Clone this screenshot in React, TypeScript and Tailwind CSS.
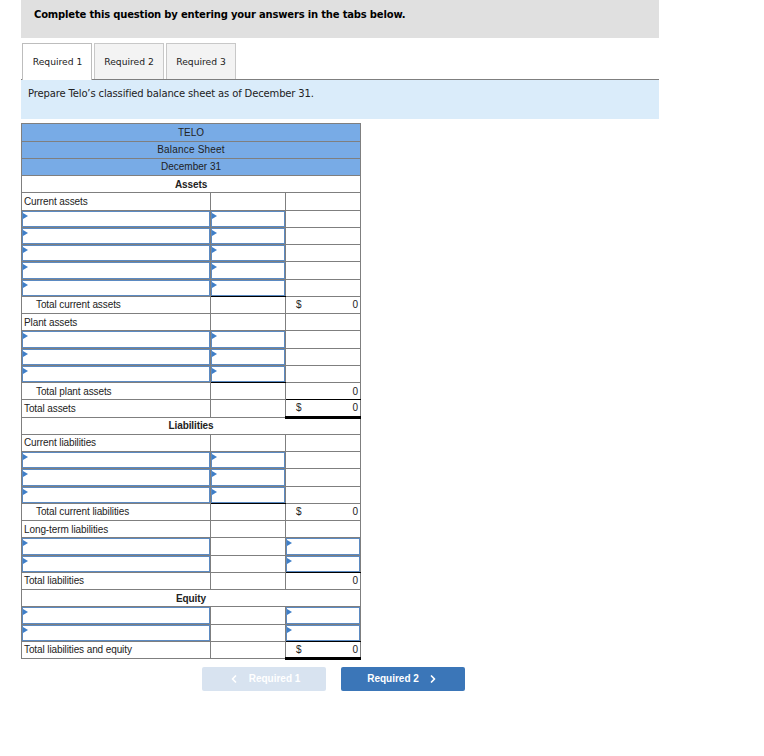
import { ChevronLeft, ChevronRight } from 'lucide-react';

type Cell = 'input' | 'dollar' | 'zero' | 'dollarZero' | '';
type Line = '' | 'black' | 'thick';

interface Row {
  label?: string;
  heading?: boolean;
  indent?: boolean;
  first?: 'input';
  second?: 'input';
  secondLine?: Line;
  third?: Cell;
  thirdLine?: Line;
  tall?: boolean;
  // the source table's text sits a pixel off centre in some rows
  nudge?: 'pt-[2px]' | 'pb-[2px]';
}

const rows: Row[] = [
  { label: 'Current assets', tall: true },
  { first: 'input', second: 'input' },
  { first: 'input', second: 'input' },
  { first: 'input', second: 'input' },
  { first: 'input', second: 'input', tall: true },
  { first: 'input', second: 'input', secondLine: 'black' },
  { label: 'Total current assets', indent: true, third: 'dollarZero' },
  { label: 'Plant assets', nudge: 'pt-[2px]' },
  { first: 'input', second: 'input', tall: true },
  { first: 'input', second: 'input' },
  { first: 'input', second: 'input', secondLine: 'black' },
  { label: 'Total plant assets', indent: true, third: 'zero', thirdLine: 'black', nudge: 'pt-[2px]' },
  { label: 'Total assets', third: 'dollarZero', thirdLine: 'thick', tall: true },
  { label: 'Liabilities', heading: true, nudge: 'pb-[2px]' },
  { label: 'Current liabilities' },
  { first: 'input', second: 'input' },
  { first: 'input', second: 'input', tall: true },
  { first: 'input', second: 'input', secondLine: 'black' },
  { label: 'Total current liabilities', indent: true, third: 'dollarZero' },
  { label: 'Long-term liabilities', nudge: 'pt-[2px]' },
  { first: 'input', third: 'input', tall: true },
  { first: 'input', third: 'input', thirdLine: 'black' },
  { label: 'Total liabilities', third: 'zero' },
  { label: 'Equity', heading: true, nudge: 'pt-[2px]' },
  { first: 'input', third: 'input', tall: true },
  { first: 'input', third: 'input', thirdLine: 'black' },
  { label: 'Total liabilities and equity', third: 'dollarZero', thirdLine: 'thick' },
];

const cellBase = 'border border-[#7f7f7f] p-0 align-middle';

function lineClass(line?: Line) {
  if (line === 'black') return 'border-b-black';
  if (line === 'thick') return 'border-b-[3px] border-b-black';
  return '';
}

function EntryBox({ tall }: { tall?: boolean }) {
  return (
    <div className={`relative ${tall ? 'h-[17px]' : 'h-[16px]'}`}>
      <input
        type="text"
        aria-label="answer"
        className="block h-full w-full border border-[#5b8ac2] bg-white outline-none"
      />
      <span className="absolute left-[1px] top-[2px] h-0 w-0 border-y-[3px] border-l-[5px] border-y-transparent border-l-[#3f7fc8]" />
    </div>
  );
}

function Amount({ kind }: { kind?: Cell }) {
  if (kind === 'input' || !kind) return null;
  return (
    <div className="flex justify-between pl-[10px] pr-[2px]">
      <span>{kind === 'dollar' || kind === 'dollarZero' ? '$' : ''}</span>
      <span>{kind === 'zero' || kind === 'dollarZero' ? '0' : ''}</span>
    </div>
  );
}

function BalanceRow({ row }: { row: Row }) {
  const height = row.tall ? 'h-[18px]' : 'h-[17px]';
  const nudge = row.nudge ?? '';

  if (row.heading) {
    return (
      <tr className={height}>
        <td colSpan={3} className={`${cellBase} ${nudge} text-center font-bold`}>
          {row.label}
        </td>
      </tr>
    );
  }

  return (
    <tr className={height}>
      <td className={`${cellBase} ${nudge}`}>
        {row.first === 'input' ? (
          <EntryBox tall={row.tall} />
        ) : (
          <div className={row.indent ? 'pl-[14px]' : 'pl-[2px]'}>{row.label}</div>
        )}
      </td>
      <td className={`${cellBase} ${lineClass(row.secondLine)}`}>
        {row.second === 'input' && <EntryBox tall={row.tall} />}
      </td>
      <td className={`${cellBase} ${nudge} ${lineClass(row.thirdLine)}`}>
        {row.third === 'input' ? <EntryBox tall={row.tall} /> : <Amount kind={row.third} />}
      </td>
    </tr>
  );
}

export default function App() {
  return (
    <div className="min-h-[756px] w-[764px] bg-white pl-[21px] font-['Liberation_Sans',Arial,sans-serif] text-[10px] leading-[12px] tracking-[-0.1px] text-[#222]">
      <div className="w-[638px] tracking-normal">
        <div className="h-[38px] bg-[#e0e0e0] pl-[13px] pt-[8px] font-['DejaVu_Sans',Verdana,sans-serif] text-[10px] font-bold leading-[14px] tracking-[-0.18px] text-black">
          Complete this question by entering your answers in the tabs below.
        </div>

        {/* Tabs */}
        <div className="mt-[5px] flex h-[37px] gap-[2px] border-b border-[#7f7f7f] pl-px font-['DejaVu_Sans',Verdana,sans-serif] text-[9.2px] text-[#222]">
          <div className="flex h-[37px] w-[70px] items-center justify-center border border-b-0 border-[#bdbdbd] bg-white pb-[1px] pl-[1px]">
            Required 1
          </div>
          <div className="flex h-[36px] w-[70px] items-center justify-center border border-b-0 border-[#c8c8c8] bg-[#f3f3f3]">
            Required 2
          </div>
          <div className="flex h-[36px] w-[70px] items-center justify-center border border-b-0 border-[#c8c8c8] bg-[#f3f3f3]">
            Required 3
          </div>
        </div>

        <div className="h-[39px] bg-[#daecfa] pl-[7px] pt-[7px] font-['DejaVu_Sans',Verdana,sans-serif] text-[10px] leading-[14px] tracking-[-0.14px] text-[#222]">
          Prepare Telo’s classified balance sheet as of December 31.
        </div>
      </div>

      <table className="mt-[4px] w-[339px] table-fixed border-collapse">
        <colgroup>
          <col className="w-[189px]" />
          <col className="w-[75px]" />
          <col className="w-[75px]" />
        </colgroup>
        <tbody>
          <tr className="h-[18px] bg-[#78abe6]">
            <td colSpan={3} className={`${cellBase} text-center tracking-normal`}>TELO</td>
          </tr>
          <tr className="h-[17px] bg-[#78abe6]">
            <td colSpan={3} className={`${cellBase} text-center tracking-[0.2px]`}>Balance Sheet</td>
          </tr>
          <tr className="h-[17px] bg-[#78abe6]">
            <td colSpan={3} className={`${cellBase} text-center tracking-normal`}>December 31</td>
          </tr>
          <tr className="h-[17px]">
            <td colSpan={3} className={`${cellBase} pt-[2px] text-center font-bold`}>Assets</td>
          </tr>
          {rows.map((row, i) => (
            <BalanceRow key={i} row={row} />
          ))}
        </tbody>
      </table>

      {/* Prev / next */}
      <div className="ml-[181px] mt-[7px] flex gap-[15px] font-bold tracking-normal text-white">
        <button className="flex h-[24px] w-[124px] items-center justify-center gap-[9px] rounded-[2px] bg-[#d8e3f0]">
          <ChevronLeft size={12} strokeWidth={3.5} />
          Required 1
        </button>
        <button className="flex h-[24px] w-[124px] items-center justify-center gap-[8px] rounded-[2px] bg-[#3b76b8]">
          Required 2
          <ChevronRight size={12} strokeWidth={3.5} />
        </button>
      </div>
    </div>
  );
}
